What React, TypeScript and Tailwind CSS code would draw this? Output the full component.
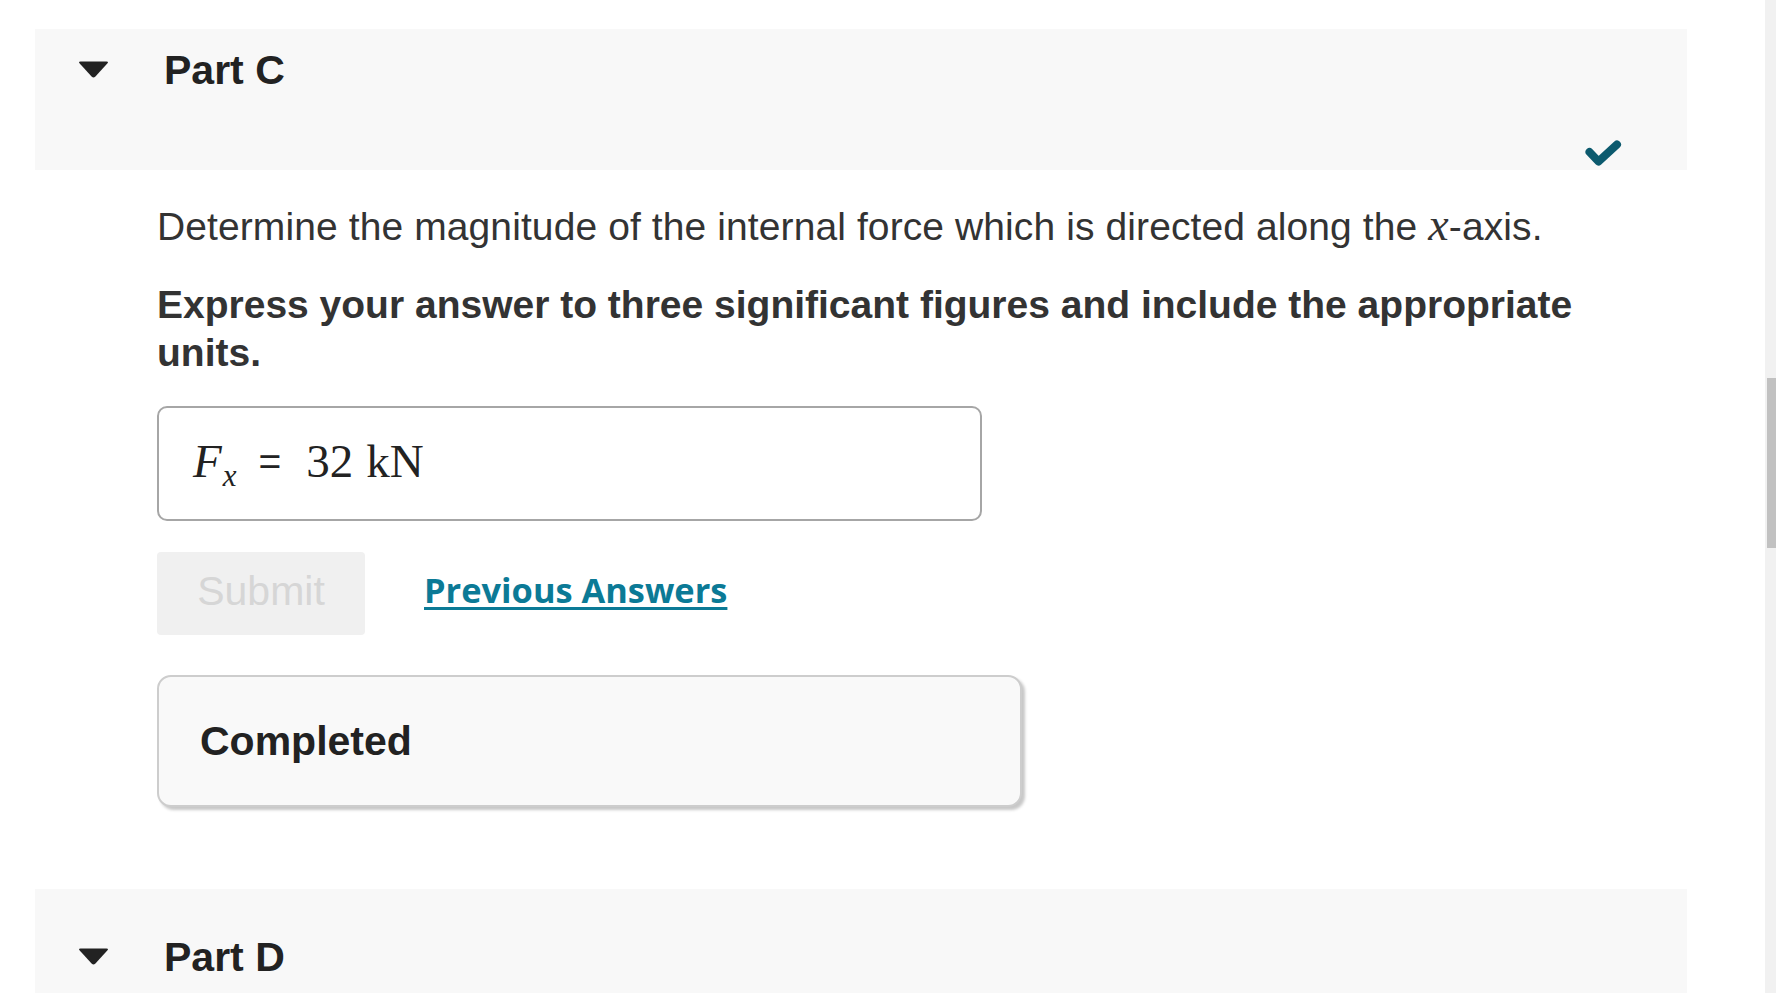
import React from "react";

function Triangle({ top }: { top: string }) {
  return (
    <svg width="31" height="17" viewBox="0 0 31 17" className={"shrink-0 " + top}>
      <path d="M2.5 0.5 L28.5 0.5 Q31 0.5 29.3 2.6 L17.2 15.8 Q15.5 17.4 13.8 15.8 L1.7 2.6 Q0 0.5 2.5 0.5 Z" fill="#222222" />
    </svg>
  );
}

function Check() {
  return (
    <svg width="37" height="28" viewBox="0 0 37 28" className="shrink-0">
      <polyline points="4.5,12 13.5,21.5 32,4.5" fill="none" stroke="#0c5a6e" strokeWidth="8" strokeLinecap="round" strokeLinejoin="round" />
    </svg>
  );
}

export default function App() {
  return (
    <div className="flex w-[1776px] h-[993px] overflow-hidden bg-white font-['Liberation_Sans',Arial,sans-serif]">
      <main className="w-[1765px] shrink-0 pt-[29px] pl-[35px]">
        <section className="w-[1652px] h-[141px] bg-[#f8f8f8] flex items-start pl-[43px] pt-[18px] pr-[65px]">
          <Triangle top="mt-[14px]" />
          <h2 className="ml-[55px] text-[41px] leading-[47px] font-bold text-[#222222]">Part C</h2>
          <div className="ml-auto self-end mb-[2px]">
            <Check />
          </div>
        </section>

        <div className="pl-[122px] pt-[31px]">
          <p className="text-[39px] leading-[48px] text-[#333333] whitespace-nowrap tracking-[0.1px]">
            Determine the magnitude of the internal force which is directed along the{" "}
            <span className="font-['Liberation_Serif',serif] italic text-[46px]">x</span>-axis.
          </p>
          <p className="mt-[30px] max-w-[1480px] text-[39px] leading-[48px] font-bold text-[#333333]">
            Express your answer to three significant figures and include the appropriate units.
          </p>

          <div className="mt-[29px] w-[825px] h-[115px] rounded-[10px] border-2 border-[#a6a6a6] bg-white flex items-center pl-[34px] pb-[4px]">
            <span className="font-['Liberation_Serif',serif] text-[47px] text-[#222222] leading-none flex items-baseline">
              <span className="italic">F</span>
              <span className="italic text-[31px] relative top-[9px] ml-[1px]">x</span>
            </span>
            <span className="ml-[22px] text-[39px] leading-none text-[#222222] font-['Liberation_Sans',Arial,sans-serif]">=</span>
            <span className="ml-[25px] font-['Liberation_Serif',serif] text-[47px] leading-none text-[#222222]">
              32<span className="ml-[13px]">kN</span>
            </span>
          </div>

          <div className="mt-[31px] flex items-center">
            <button className="w-[208px] h-[83px] rounded-[4px] bg-[#f0f0f0] text-[41px] text-[#d6d6d6] flex items-center justify-center pb-[4px]">
              Submit
            </button>
            <a className="ml-[59px] -mt-[7px] font-['Open_Sans',sans-serif] font-bold text-[34.4px] leading-[48px] text-[#0b7a96] underline decoration-[3px] underline-offset-[4px]">
              Previous Answers
            </a>
          </div>

          <div className="mt-[40px] w-[865px] rounded-[14px] border-2 border-[#cdcdcd] bg-[#f9f9f9] shadow-[3px_3px_3px_rgba(0,0,0,0.22)] pl-[41px] pt-[41px] pb-[40px]">
            <div className="text-[41px] leading-[47px] font-bold text-[#222222]">Completed</div>
          </div>
        </div>

        <section className="mt-[82px] w-[1652px] h-[200px] bg-[#f8f8f8] flex items-start pl-[43px] pt-[45px]">
          <Triangle top="mt-[14px]" />
          <h2 className="ml-[55px] text-[41px] leading-[47px] font-bold text-[#222222]">Part D</h2>
        </section>
      </main>

      <div className="w-[11px] shrink-0 h-full bg-[#f1f1f1] flex flex-col pl-[2px]">
        <div className="h-[378px] shrink-0" />
        <div className="h-[170px] shrink-0 bg-[#c1c1c1]" />
      </div>
    </div>
  );
}
